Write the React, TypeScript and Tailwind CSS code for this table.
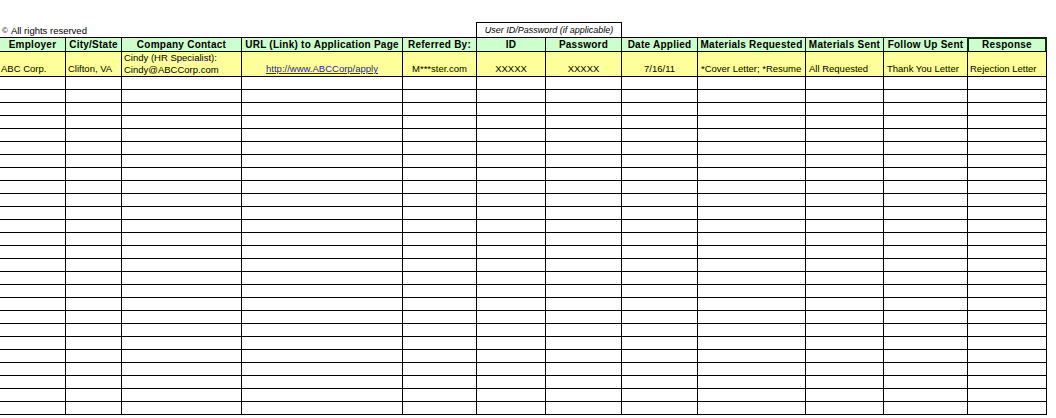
const cols = [66, 56, 120, 161, 74, 69, 76, 76, 108, 78, 84, 79];

const headers = [
  "Employer",
  "City/State",
  "Company Contact",
  "URL (Link) to Application Page",
  "Referred By:",
  "ID",
  "Password",
  "Date Applied",
  "Materials Requested",
  "Materials Sent",
  "Follow Up Sent",
  "Response",
];

const EMPTY_ROWS = 26;

function Cell({
  w,
  className = "",
  children,
}: {
  w: number;
  className?: string;
  children?: React.ReactNode;
}) {
  return (
    <div
      className={`shrink-0 border-r border-b border-black overflow-hidden whitespace-nowrap ${className}`}
      style={{ width: w }}
    >
      {children}
    </div>
  );
}

export default function App() {
  return (
    <div
      className="w-[1056px] h-[418px] bg-white text-black overflow-hidden"
      style={{ fontFamily: '"Liberation Sans", Arial, sans-serif' }}
    >
      <div className="w-[1047px]">
        {/* spacer row */}
        <div className="h-[22px]" />

        {/* note row */}
        <div className="flex h-[15px]">
          <div className="w-[476px] shrink-0 flex items-end pl-[2px] text-[9.5px] leading-[12px]">
            <span className="text-[8px] mr-[3px]">©</span>
            All rights reserved
          </div>
          <div className="w-[146px] shrink-0 border-t border-l border-r border-black flex items-center justify-center italic text-[9px] leading-none">
            User ID/Password (if applicable)
          </div>
        </div>

        {/* header */}
        <div className="flex">
          {headers.map((h, i) => (
            <div
              key={h}
              className="relative shrink-0 h-[15px] border-t border-b border-r border-black bg-[#ccffcc] flex items-center justify-center font-bold text-[10px] tracking-[0.25px] leading-none whitespace-nowrap"
              style={{ width: cols[i] }}
            >
              {h}
              {i === headers.length - 1 && (
                <div className="absolute -left-[1px] -top-[1px] -right-[1px] bottom-0 border-2 border-[#0a2a0a] border-b-0" />
              )}
            </div>
          ))}
        </div>

        {/* sample row */}
        <div className="flex h-[25px] bg-[#ffff99] text-[9.5px] leading-[12px]">
          <Cell w={cols[0]} className="flex items-end pb-[1px] pl-[1px]">ABC Corp.</Cell>
          <Cell w={cols[1]} className="flex items-end pb-[1px] pl-[2px]">Clifton, VA</Cell>
          <Cell w={cols[2]} className="flex flex-col justify-end pb-[0px] pl-[2px]">
            <span>Cindy (HR Specialist):</span>
            <span>Cindy@ABCCorp.com</span>
          </Cell>
          <Cell w={cols[3]} className="flex items-end justify-center pb-[1px]">
            <span className="text-[#1a1acc] underline">http://www.ABCCorp/apply</span>
          </Cell>
          <Cell w={cols[4]} className="flex items-end justify-center pb-[1px]">M***ster.com</Cell>
          <Cell w={cols[5]} className="flex items-end justify-center pb-[1px]">XXXXX</Cell>
          <Cell w={cols[6]} className="flex items-end justify-center pb-[1px]">XXXXX</Cell>
          <Cell w={cols[7]} className="flex items-end justify-center pb-[1px]">7/16/11</Cell>
          <Cell w={cols[8]} className="flex items-end pb-[1px] pl-[3px]">*Cover Letter; *Resume</Cell>
          <Cell w={cols[9]} className="flex items-end pb-[1px] pl-[3px]">All Requested</Cell>
          <Cell w={cols[10]} className="flex items-end pb-[1px] pl-[3px]">Thank You Letter</Cell>
          <Cell w={cols[11]} className="flex items-end pb-[1px] pl-[2px]">Rejection Letter</Cell>
        </div>

        {/* empty rows */}
        {Array.from({ length: EMPTY_ROWS }).map((_, r) => (
          <div key={r} className="flex h-[13px]">
            {cols.map((w, i) => (
              <Cell key={i} w={w} />
            ))}
          </div>
        ))}
      </div>
    </div>
  );
}
